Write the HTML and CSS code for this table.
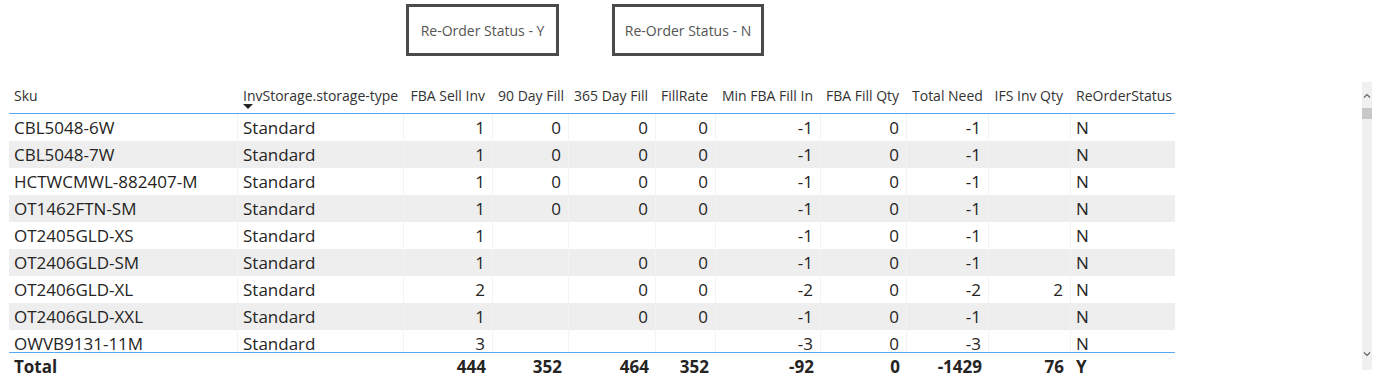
FILE: index.html
```
<!DOCTYPE html>
<html>
<head>
<meta charset="utf-8">
<link rel="stylesheet" href="styles.css">
</head>
<body>
<div class="slicers">
  <div class="slicer">Re-Order Status - Y</div>
  <div class="slicer">Re-Order Status - N</div>
</div>
<div class="visual">
  <div class="table">
    <div class="row head">
      <div class="c">Sku</div>
      <div class="c">InvStorage.storage-type<span class="sort"></span></div>
      <div class="c r">FBA Sell Inv</div>
      <div class="c r">90 Day Fill</div>
      <div class="c r">365 Day Fill</div>
      <div class="c r">FillRate</div>
      <div class="c r">Min FBA Fill In</div>
      <div class="c r">FBA Fill Qty</div>
      <div class="c r">Total Need</div>
      <div class="c r">IFS Inv Qty</div>
      <div class="c">ReOrderStatus</div>
    </div>
    <div class="body">
      <div class="row"><div class="c">CBL5048-6W</div><div class="c">Standard</div><div class="c r">1</div><div class="c r">0</div><div class="c r">0</div><div class="c r">0</div><div class="c r">-1</div><div class="c r">0</div><div class="c r">-1</div><div class="c r"></div><div class="c">N</div></div>
      <div class="row alt"><div class="c">CBL5048-7W</div><div class="c">Standard</div><div class="c r">1</div><div class="c r">0</div><div class="c r">0</div><div class="c r">0</div><div class="c r">-1</div><div class="c r">0</div><div class="c r">-1</div><div class="c r"></div><div class="c">N</div></div>
      <div class="row"><div class="c">HCTWCMWL-882407-M</div><div class="c">Standard</div><div class="c r">1</div><div class="c r">0</div><div class="c r">0</div><div class="c r">0</div><div class="c r">-1</div><div class="c r">0</div><div class="c r">-1</div><div class="c r"></div><div class="c">N</div></div>
      <div class="row alt"><div class="c">OT1462FTN-SM</div><div class="c">Standard</div><div class="c r">1</div><div class="c r">0</div><div class="c r">0</div><div class="c r">0</div><div class="c r">-1</div><div class="c r">0</div><div class="c r">-1</div><div class="c r"></div><div class="c">N</div></div>
      <div class="row"><div class="c">OT2405GLD-XS</div><div class="c">Standard</div><div class="c r">1</div><div class="c r"></div><div class="c r"></div><div class="c r"></div><div class="c r">-1</div><div class="c r">0</div><div class="c r">-1</div><div class="c r"></div><div class="c">N</div></div>
      <div class="row alt"><div class="c">OT2406GLD-SM</div><div class="c">Standard</div><div class="c r">1</div><div class="c r"></div><div class="c r">0</div><div class="c r">0</div><div class="c r">-1</div><div class="c r">0</div><div class="c r">-1</div><div class="c r"></div><div class="c">N</div></div>
      <div class="row"><div class="c">OT2406GLD-XL</div><div class="c">Standard</div><div class="c r">2</div><div class="c r"></div><div class="c r">0</div><div class="c r">0</div><div class="c r">-2</div><div class="c r">0</div><div class="c r">-2</div><div class="c r">2</div><div class="c">N</div></div>
      <div class="row alt"><div class="c">OT2406GLD-XXL</div><div class="c">Standard</div><div class="c r">1</div><div class="c r"></div><div class="c r">0</div><div class="c r">0</div><div class="c r">-1</div><div class="c r">0</div><div class="c r">-1</div><div class="c r"></div><div class="c">N</div></div>
      <div class="row"><div class="c">OWVB9131-11M</div><div class="c">Standard</div><div class="c r">3</div><div class="c r"></div><div class="c r"></div><div class="c r"></div><div class="c r">-3</div><div class="c r">0</div><div class="c r">-3</div><div class="c r"></div><div class="c">N</div></div>
    </div>
    <div class="row total">
      <div class="c">Total</div><div class="c"></div><div class="c r">444</div><div class="c r">352</div><div class="c r">464</div><div class="c r">352</div><div class="c r">-92</div><div class="c r">0</div><div class="c r">-1429</div><div class="c r">76</div><div class="c">Y</div>
    </div>
  </div>
  <div class="scroll">
    <svg class="chev" width="10" height="8" viewBox="0 0 10 8"><path d="M2 5.5 L5 2.5 L8 5.5" fill="none" stroke="#666" stroke-width="1.2"/></svg>
    <div class="thumb"></div>
    <div class="fill"></div>
    <svg class="chev" width="10" height="8" viewBox="0 0 10 8"><path d="M2 2.5 L5 5.5 L8 2.5" fill="none" stroke="#666" stroke-width="1.2"/></svg>
  </div>
</div>
</body>
</html>
```
FILE: styles.css
```
* { box-sizing: border-box; }
html, body { margin: 0; padding: 0; background: #fff; }
body {
  font-family: "Open Sans", "Noto Sans", sans-serif;
  color: #252423;
  width: 1380px;
  height: 388px;
  overflow: hidden;
}
.slicers {
  display: flex;
  gap: 53px;
  padding: 4px 0 0 406px;
}
.slicer {
  width: 153px;
  height: 52px;
  border: 3px solid #4b4b4b;
  display: flex;
  align-items: center;
  justify-content: center;
  font-size: 14px;
  color: #555;
}
.slicer + .slicer { width: 152px; }
.visual {
  display: flex;
  margin-top: 25px;
  padding-left: 9px;
}
.table { width: 1166px; }
.row {
  display: grid;
  grid-template-columns: 229px 166px 89px 76px 87px 60px 105px 86px 82px 82px 104px;
  height: 27px;
  font-size: 17px;
  line-height: 28px;
}
.c {
  padding: 0 5px;
  white-space: nowrap;
  overflow: hidden;
  border-right: 1px solid #f3f3f3;
}
.c:last-child { border-right: none; }
.r { text-align: right; padding-right: 7px; }
.alt { background: #eeeeee; }
.head {
  height: 33px;
  font-size: 14px;
  line-height: 19px;
  color: #333;
  border-bottom: 1px solid #5aa9ef;
}
.head .c { padding-top: 5px; border-right: 1px solid #fff; }
.sort {
  display: block;
  width: 0;
  height: 0;
  margin-top: -1px;
  border-left: 5px solid transparent;
  border-right: 5px solid transparent;
  border-top: 5px solid #252423;
}
.body {
  height: 239px;
  overflow: hidden;
  border-bottom: 1px solid #5aa9ef;
}
.total {
  font-weight: 700;
  height: 28px;
  line-height: 28px;
}
.total .c { border-right: none; }
.scroll {
  margin-left: auto;
  margin-right: 8px;
  margin-top: 1px;
  width: 10px;
  height: 288px;
  background: #f0f0f0;
  display: flex;
  flex-direction: column;
  align-items: center;
  padding-top: 10px;
}
.chev { display: block; flex: none; }
.thumb {
  flex: none;
  width: 10px;
  height: 11px;
  background: #c8c8c8;
  margin-top: 8px;
}
.fill { flex: 1; }
.chev:last-child { margin-bottom: 12px; }
```
